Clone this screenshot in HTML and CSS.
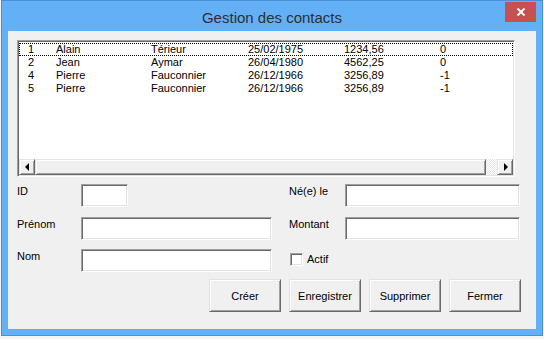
FILE: index.html
```html
<!DOCTYPE html>
<html lang="fr">
<head>
<meta charset="utf-8">
<title>Gestion des contacts</title>
<link rel="stylesheet" href="styles.css">
</head>
<body>
<div class="window">
  <div class="titlebar">
    <span class="title">Gestion des contacts</span>
    <div class="close">
      <svg width="10" height="10" viewBox="0 0 10 10"><path d="M1.5 1.5 L8.5 8.5 M8.5 1.5 L1.5 8.5" stroke="#fff" stroke-width="1.8" fill="none"/></svg>
    </div>
  </div>
  <div class="client">
    <div class="listbox">
      <div class="rows">
        <div class="row focus"><span>1</span><span>Alain</span><span>Térieur</span><span>25/02/1975</span><span>1234,56</span><span>0</span></div>
        <div class="row"><span>2</span><span>Jean</span><span>Aymar</span><span>26/04/1980</span><span>4562,25</span><span>0</span></div>
        <div class="row"><span>4</span><span>Pierre</span><span>Fauconnier</span><span>26/12/1966</span><span>3256,89</span><span>-1</span></div>
        <div class="row"><span>5</span><span>Pierre</span><span>Fauconnier</span><span>26/12/1966</span><span>3256,89</span><span>-1</span></div>
      </div>
      <div class="hscroll">
        <div class="sbtn"><span class="arrow-left"></span></div>
        <div class="thumb"></div>
        <div class="track"></div>
        <div class="sbtn"><span class="arrow-right"></span></div>
      </div>
    </div>
    <div class="form">
      <label class="lbl">ID</label>
      <div class="cell"><div class="textbox tb-id"></div></div>
      <div></div>
      <label class="lbl">Né(e) le</label>
      <div class="cell"><div class="textbox tb-wide"></div></div>

      <label class="lbl">Prénom</label>
      <div class="cell"><div class="textbox tb-mid"></div></div>
      <div></div>
      <label class="lbl">Montant</label>
      <div class="cell"><div class="textbox tb-wide"></div></div>

      <label class="lbl">Nom</label>
      <div class="cell"><div class="textbox tb-mid"></div></div>
      <div></div>
      <div class="check-cell"><span class="checkbox"></span><span class="check-label">Actif</span></div>
      <div></div>
    </div>
    <div class="buttons">
      <div class="btn">Créer</div>
      <div class="btn">Enregistrer</div>
      <div class="btn">Supprimer</div>
      <div class="btn">Fermer</div>
    </div>
  </div>
</div>
</body>
</html>
```
FILE: styles.css
```css
* { box-sizing: border-box; }
html, body { margin: 0; padding: 0; background: #f4f4f4; }
body {
  width: 544px;
  height: 339px;
  overflow: hidden;
  font-family: "Liberation Sans", Arial, sans-serif;
  font-size: 11px;
  color: #000;
}
.window {
  margin-left: 1px;
  width: 542px;
  height: 336px;
  background: #63b0f7;
  border: 1px solid #4b8fd6;
  padding: 0 6px 6px 6px;
  display: flex;
  flex-direction: column;
}
.titlebar {
  height: 30px;
  display: grid;
  grid-template-columns: 1fr auto 1fr;
  align-items: start;
}
.title {
  grid-column: 2;
  font-size: 15px;
  line-height: 18px;
  margin-top: 8px;
  color: #2e2e2e;
}
.close {
  grid-column: 3;
  justify-self: end;
  width: 31px;
  height: 20px;
  margin-top: 1px;
  background: #c75050;
  display: flex;
  align-items: center;
  justify-content: center;
}
.client {
  flex: 1;
  background: #f0f0f0;
  padding: 9px 15px 0 9px;
  display: flex;
  flex-direction: column;
}
.listbox {
  width: 498px;
  height: 137px;
  background: #fff;
  border: 1px solid;
  border-color: #a0a0a0 #fff #fff #a0a0a0;
  box-shadow: inset 1px 1px 0 #696969, inset -1px -1px 0 #e3e3e3;
  padding: 1px;
  display: flex;
  flex-direction: column;
}
.rows {
  flex: 1;
  padding-top: 1px;
}
.row {
  height: 13px;
  line-height: 12px;
  display: grid;
  grid-template-columns: 28px 95px 97px 96px 96px 1fr;
  padding-left: 9px;
  white-space: nowrap;
}
.row.focus {
  outline: 1px dotted #000;
  outline-offset: -1px;
  line-height: 13px;
}
.hscroll {
  height: 16px;
  display: flex;
}
.sbtn, .thumb {
  background: #f0f0f0;
  border: 1px solid;
  border-color: #e3e3e3 #696969 #696969 #e3e3e3;
  box-shadow: inset 1px 1px 0 #fff, inset -1px -1px 0 #a0a0a0;
}
.sbtn {
  width: 16px;
  display: flex;
  align-items: center;
  justify-content: center;
}
.thumb { flex: 1; }
.track {
  width: 11px;
  background-color: #fff;
  background-image: conic-gradient(#fff 25%, #e6e6e6 0 50%, #fff 0 75%, #e6e6e6 0);
  background-size: 2px 2px;
}
.arrow-left {
  width: 0; height: 0;
  border-top: 4px solid transparent;
  border-bottom: 4px solid transparent;
  border-right: 4px solid #000;
  margin-left: -1px;
}
.arrow-right {
  width: 0; height: 0;
  border-top: 4px solid transparent;
  border-bottom: 4px solid transparent;
  border-left: 4px solid #000;
  margin-left: 1px;
}
.form {
  margin-top: 7px;
  display: grid;
  grid-template-columns: 64px 191px 17px 56px 175px;
  grid-template-rows: 33px 32px 23px;
  align-items: start;
}
.lbl {
  line-height: 13px;
  padding-top: 1px;
  white-space: nowrap;
}
.textbox {
  height: 23px;
  background: #fff;
  border: 1px solid;
  border-color: #a0a0a0 #fff #fff #a0a0a0;
  box-shadow: inset 1px 1px 0 #696969, inset -1px -1px 0 #e3e3e3;
}
.tb-id { width: 47px; }
.tb-mid { width: 191px; }
.tb-wide { width: 175px; }
.check-cell {
  grid-column: 4 / span 2;
  display: flex;
  align-items: center;
  padding-top: 4px;
  padding-left: 1px;
}
.checkbox {
  width: 13px;
  height: 13px;
  background: #fff;
  border: 1px solid;
  border-color: #a0a0a0 #fff #fff #a0a0a0;
  box-shadow: inset 1px 1px 0 #696969, inset -1px -1px 0 #e3e3e3;
}
.check-label {
  margin-left: 4px;
  line-height: 13px;
}
.buttons {
  margin-top: 7px;
  display: flex;
  justify-content: flex-end;
  gap: 8px;
}
.btn {
  width: 72px;
  height: 33px;
  background: #f0f0f0;
  border: 1px solid;
  border-color: #e3e3e3 #696969 #696969 #e3e3e3;
  box-shadow: inset 1px 1px 0 #fff, inset -1px -1px 0 #a0a0a0;
  display: flex;
  align-items: center;
  justify-content: center;
  white-space: nowrap;
}
```
